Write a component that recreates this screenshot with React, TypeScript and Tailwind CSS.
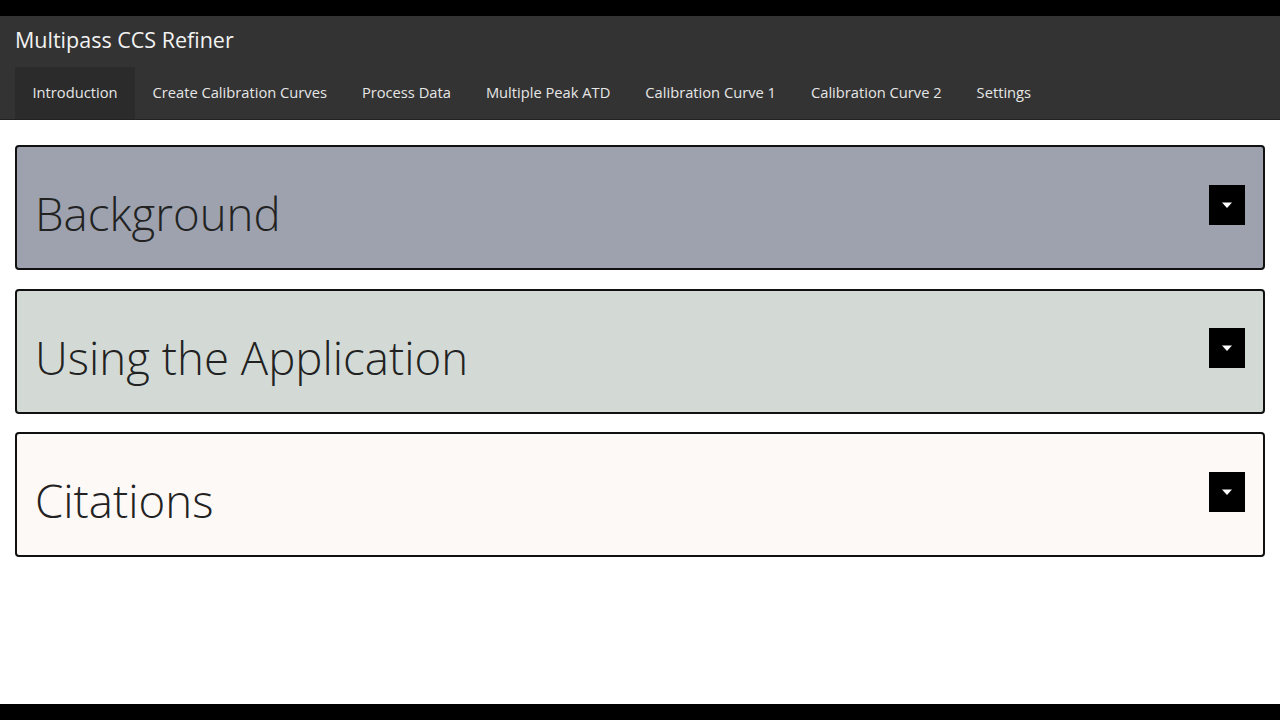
import React from 'react';

const tabs = [
  'Introduction',
  'Create Calibration Curves',
  'Process Data',
  'Multiple Peak ATD',
  'Calibration Curve 1',
  'Calibration Curve 2',
  'Settings',
];

const panels = [
  { title: 'Background', bg: 'bg-[#9da2ae]' },
  { title: 'Using the Application', bg: 'bg-[#d3dad6]' },
  { title: 'Citations', bg: 'bg-[#fdf9f6]' },
];

const Caret = () => (
  <div className="w-[36px] h-[40px] bg-black flex items-center justify-center mb-[6px]">
    <svg width="12" height="8" viewBox="0 0 12 8">
      <path d="M1 1.5 L11 1.5 L6 7 Z" fill="#fff" />
    </svg>
  </div>
);

export default function App() {
  return (
    <div className="min-h-[720px] h-[720px] flex flex-col bg-white" style={{ fontFamily: '"Open Sans", sans-serif' }}>
      <div className="h-[16px] bg-black" />
      <header className="bg-[#333333] h-[104px] px-[15px] border-b border-[#222]">
        <div className="h-[51px] flex items-center text-[21.5px] text-[#f2f2f2] pb-[2px]">Multipass CCS Refiner</div>
        <nav className="flex h-[52px]">
          {tabs.map((t, i) => (
            <div
              key={t}
              className={`px-[17.5px] flex items-center text-[14.7px] text-[#e6e6e6] pb-[1px] ${i === 0 ? 'bg-[#2b2b2b]' : ''}`}
            >
              {t}
            </div>
          ))}
        </nav>
      </header>
      <main className="flex-1 px-[15px] pt-[25px] flex flex-col gap-[18.5px]">
        {panels.map(p => (
          <div
            key={p.title}
            className={`${p.bg} h-[125px] border-2 border-[#111] rounded-[4px] flex items-center justify-between pl-[18px] pr-[18px]`}
          >
            <h2 className="text-[45.6px] font-light text-[#222] pt-[12px]">{p.title}</h2>
            <Caret />
          </div>
        ))}
      </main>
      <div className="h-[16px] bg-black" />
    </div>
  );
}
